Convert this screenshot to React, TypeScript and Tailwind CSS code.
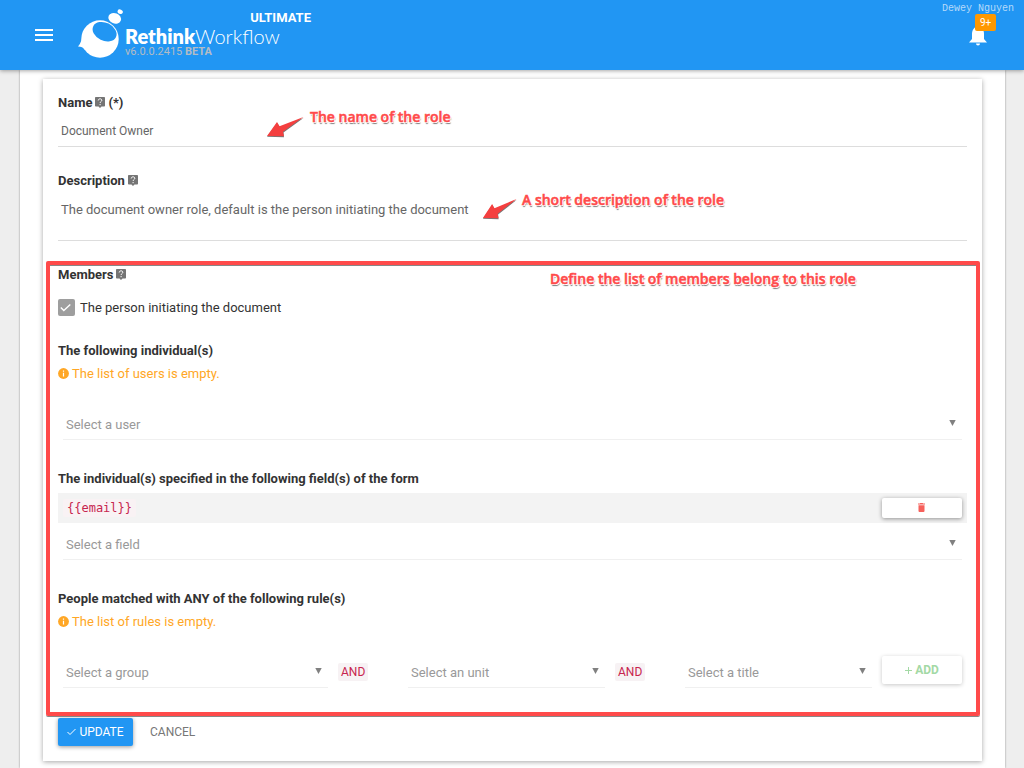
import { useState } from "react";
import type { ReactNode } from "react";

const annotationText =
  "pointer-events-none absolute whitespace-nowrap font-['Open_Sans',sans-serif] text-[14px] leading-5 font-semibold text-[#ff4a4a] [-webkit-text-stroke:0.5px_#ff4a4a] [text-shadow:1px_1px_0_#fff,-1px_1px_0_#fff,1px_-1px_0_#fff,-1px_-1px_0_#fff,1px_2px_1px_#777]";

function HelpIcon() {
  return (
    <svg viewBox="0 0 10 11" className="mb-0.5 h-[11px] w-[10px] shrink-0" aria-hidden="true">
      <path d="M.8 0h8.400a.8.800 0 0 1 .8.800v7.900a.8.800 0 0 1-.8.800H6.500L5 11 3.500 9.500H.8a.8.800 0 0 1-.8-.8V.8A.8.800 0 0 1 .8 0z" fill="#757575" />
      <path d="M3.200 3.500C3.200 1.300 6.800 1.300 6.800 3.300c0 1.300-1.700 1.300-1.700 2.700M5.100 7v1.200" fill="none" stroke="#fff" strokeWidth="1" />
    </svg>
  );
}

function InfoIcon() {
  return (
    <svg viewBox="0 0 11 11" className="mb-0.5 h-[11px] w-[11px] shrink-0" aria-hidden="true">
      <circle cx="5.500" cy="5.500" r="5.400" fill="#ffa726" />
      <path d="M5.500 2.400v1.300M5.500 4.700v3.700" stroke="#fff" strokeWidth="1.200" />
    </svg>
  );
}

function Logo() {
  return (
    <svg viewBox="0 0 48 50" className="h-[50px] w-12 shrink-0" aria-hidden="true">
      <circle cx="23" cy="30" r="18.700" fill="#fff" />
      <path d="M1 37.500C4 34.500 4.500 30 6.500 25C8 21.500 10 18.500 14 15L20 40L8 41C6.500 38.500 4 37.500 1 37.500Z" fill="#fff" />
      <ellipse cx="27.600" cy="22.700" rx="12.600" ry="9" transform="rotate(26 27.600 22.700)" fill="#2196f3" />
      <ellipse cx="37.700" cy="9.300" rx="6.500" ry="5.200" transform="rotate(22 37.700 9.300)" fill="#fff" />
      <ellipse cx="43.200" cy="2.700" rx="2.700" ry="2.200" transform="rotate(22 43.200 2.700)" fill="#fff" />
    </svg>
  );
}

function Arrow({ className }: { className: string }) {
  return (
    <svg viewBox="0 0 38 22" preserveAspectRatio="none" className={className} aria-hidden="true">
      <path d="M37.500 2 17.500 16.500l.5 4.700L1 20.800 11 7l3 4z" fill="#777" />
      <path d="M37.500 1 17 15.700l1 4.500L1 19.900 11 6l2.500 4.200z" fill="#f43f3f" />
    </svg>
  );
}

function Heading({ children }: { children: ReactNode }) {
  return <h2 className="text-[13px] leading-5 font-bold text-[#333]">{children}</h2>;
}

function EmptyNote({ children }: { children: ReactNode }) {
  return (
    <p className="mt-[3px] flex items-center gap-[3px] text-[13px] leading-5 text-[#ffa726]">
      <InfoIcon />
      {children}
    </p>
  );
}

function Picker({ label }: { label: string }) {
  return (
    <div className="relative min-w-0 border-b border-[#f0f0f0]">
      <select
        aria-label={label}
        className="block h-[30px] w-full cursor-pointer appearance-none bg-transparent pt-px pr-6 pl-[3px] text-[13px] text-[#999] outline-none"
      >
        <option>{label}</option>
      </select>
      <svg viewBox="0 0 7 6" className="pointer-events-none absolute top-[11px] right-[6px] h-[6px] w-[7px]" aria-hidden="true">
        <path d="M.3 0h6.400L3.500 6z" fill="#808080" />
      </svg>
    </div>
  );
}

function And() {
  return (
    <code className="mb-[7px] justify-self-start rounded-[2px] bg-[#f7f2f4] px-[3px] font-['Roboto',sans-serif] text-[12px] leading-[18px] text-[#c7254e]">
      AND
    </code>
  );
}

export default function App() {
  const [initiator, setInitiator] = useState(true);
  return (
    <div className="min-h-screen bg-[#eeeeee] font-['Roboto',sans-serif] text-[#333]">
      <header className="relative z-10 flex h-[70px] items-start bg-[#2196f3] pr-[10px] pl-[35px] text-white shadow-[0_1px_4px_rgba(0,0,0,0.35)]">
        <button aria-label="Menu" className="mt-[29px] flex w-[18px] flex-col gap-[3px]">
          <span className="h-[2px] w-full bg-white" />
          <span className="h-[2px] w-full bg-white" />
          <span className="h-[2px] w-full bg-white" />
        </button>
        <a href="#" aria-label="RethinkWorkflow" className="mt-[9px] ml-6 flex">
          <Logo />
          <span className="flex w-[186px] flex-col pt-px">
            <span className="text-right text-[13px] leading-4 font-bold">ULTIMATE</span>
            <span className="font-['Lato',sans-serif] text-[20px] leading-5">
              <b className="font-extrabold">Rethink</b>
              <span className="font-light">Workflow</span>
            </span>
            <span className="text-[11px] leading-3 text-[#b4bcc4]">
              v6.0.0.2415 <b>BETA</b>
            </span>
          </span>
        </a>
        <div className="ml-auto flex flex-col items-end">
          <span className="mt-[3px] font-['Liberation_Mono',monospace] text-[10px] leading-3 text-[#b5dafa]">Dewey Nguyen</span>
          <button aria-label="Notifications" className="relative mt-[11px] mr-[25px] h-5 w-5">
            <svg viewBox="0 0 18 20" className="h-5 w-[18px]" aria-hidden="true">
              <path d="M9 0C5 1 3 4 3 8v5L0 16.500h18L15 13V8C15 4 13 1 9 0zM7 17.500a2 2 0 0 0 4 0z" fill="#fff" />
            </svg>
            <span className="absolute -top-[12px] left-[6px] rounded-[2px] bg-[#ff9800] px-[5px] text-[10px] leading-[17px]">9+</span>
          </button>
        </div>
      </header>

      <main className="mr-[19px] ml-5 bg-white px-[23px] pt-[9px] pb-[7px] shadow-[0_0_2px_rgba(0,0,0,0.4)]">
        <form
          onSubmit={(e) => e.preventDefault()}
          className="bg-white px-[15px] pt-[14px] pb-[15px] shadow-[0_1px_5px_rgba(0,0,0,0.35)]"
        >
          <div className="relative">
            <label htmlFor="role-name" className="flex items-center gap-[3px] text-[13px] leading-5 font-bold text-[#333]">
              Name <HelpIcon /> (*)
            </label>
            <input
              id="role-name"
              defaultValue="Document Owner"
              className="mt-0.5 block h-8 w-full border-b border-[#ddd] bg-transparent px-[3px] text-[12px] text-[#666] outline-none"
            />
            <Arrow className="absolute top-[23px] left-[208px] h-[22px] w-[38px]" />
            <span className={`${annotationText} top-[14px] left-[252px]`}>The name of the role</span>
          </div>

          <div className="relative mt-6">
            <label htmlFor="role-description" className="flex items-center gap-[3px] text-[13px] leading-5 font-bold text-[#333]">
              Description <HelpIcon />
            </label>
            <textarea
              id="role-description"
              defaultValue="The document owner role, default is the person initiating the document"
              className="block h-[50px] w-full resize-none border-b border-[#ddd] bg-transparent px-[3px] pt-[9px] text-[13px] leading-5 text-[#666] outline-none"
            />
            <Arrow className="absolute top-[27px] left-[424px] h-[22px] w-[35px]" />
            <span className={`${annotationText} top-[19px] left-[464px]`}>A short description of the role</span>
          </div>

          <section className="relative mt-6">
            <div className="pointer-events-none absolute -top-1 -right-[13px] -bottom-7 -left-3 rounded-[2px] border-4 border-[#ff4a4a] shadow-[0_1px_0_#888,inset_0_1px_0_#888]" />
            <span className={`${annotationText} top-1 left-[492px]`}>Define the list of members belong to this role</span>

            <div className="flex items-center gap-[3px]">
              <Heading>Members</Heading>
              <HelpIcon />
            </div>
            <label className="mt-[13px] flex items-start gap-[5px] text-[13px] leading-5">
              <span className="relative mt-px h-[17px] w-[17px]">
                <input
                  type="checkbox"
                  checked={initiator}
                  onChange={(e) => setInitiator(e.target.checked)}
                  className="block h-[17px] w-[17px] appearance-none rounded-[2px] bg-[#9e9e9e]"
                />
                {initiator && (
                  <svg viewBox="0 0 17 17" className="pointer-events-none absolute inset-0" aria-hidden="true">
                    <path d="m2.800 8.500 3 3 6.500-6" fill="none" stroke="#fff" strokeWidth="1.400" />
                  </svg>
                )}
              </span>
              The person initiating the document
            </label>

            <div className="mt-[23px]">
              <Heading>The following individual(s)</Heading>
              <EmptyNote>The list of users is empty.</EmptyNote>
              <div className="mt-[25px] px-[5px]">
                <Picker label="Select a user" />
              </div>
            </div>

            <div className="mt-[29px]">
              <Heading>The individual(s) specified in the following field(s) of the form</Heading>
              <div className="mt-1 flex h-[30px] items-center justify-between bg-[#f3f3f3] px-[5px]">
                <code className="rounded-[2px] bg-[#f9f2f4] px-1 font-['DejaVu_Sans_Mono',monospace] text-[12px] leading-[18px] text-[#c7254e]">
                  {"{{email}}"}
                </code>
                <button
                  type="button"
                  aria-label="Delete field"
                  className="flex h-5 w-20 items-center justify-center rounded-[2px] bg-white pr-0.5 pb-0.5 shadow-[0_1px_4px_rgba(0,0,0,0.4)]"
                >
                  <svg viewBox="0 0 7 9" className="h-[9px] w-[7px]" aria-hidden="true">
                    <path d="M2.300 0h2.400l.4.500H7v1H0v-1h1.900zM.5 2.200h6V8a1 1 0 0 1-1 1h-4a1 1 0 0 1-1-1z" fill="#f6605b" />
                  </svg>
                </button>
              </div>
              <div className="mt-[6px] px-[5px]">
                <Picker label="Select a field" />
              </div>
            </div>

            <div className="mt-[29px]">
              <Heading>People matched with ANY of the following rule(s)</Heading>
              <EmptyNote>The list of rules is empty.</EmptyNote>
              <div className="mt-6 grid grid-cols-[265fr_60px_197fr_60px_187fr_80px] items-end gap-x-[10px] px-[5px]">
                <Picker label="Select a group" />
                <And />
                <Picker label="Select an unit" />
                <And />
                <Picker label="Select a title" />
                <button
                  type="button"
                  className="mb-1 flex h-7 items-center justify-center gap-[3px] rounded-[2px] bg-white text-[12px] font-bold text-[#a3d9a5] shadow-[0_1px_4px_rgba(0,0,0,0.22)]"
                >
                  <svg viewBox="0 0 7 7" className="h-[7px] w-[7px]" aria-hidden="true">
                    <path d="M3.500 0v7M0 3.500h7" stroke="currentColor" />
                  </svg>
                  ADD
                </button>
              </div>
            </div>
          </section>

          <div className="mt-[30px] flex gap-[17px]">
            <button
              type="submit"
              className="flex h-7 w-[75px] items-center justify-center gap-[3px] rounded-[2px] bg-[#2196f3] text-[12px] text-white shadow-[0_1px_4px_rgba(0,0,0,0.4)]"
            >
              <svg viewBox="0 0 9 8" className="h-2 w-[9px]" aria-hidden="true">
                <path d="m.5 4 2.500 2.500L8.500 1" fill="none" stroke="currentColor" />
              </svg>
              UPDATE
            </button>
            <button type="button" className="h-7 text-[12px] text-[#777]">
              CANCEL
            </button>
          </div>
        </form>
      </main>
    </div>
  );
}
